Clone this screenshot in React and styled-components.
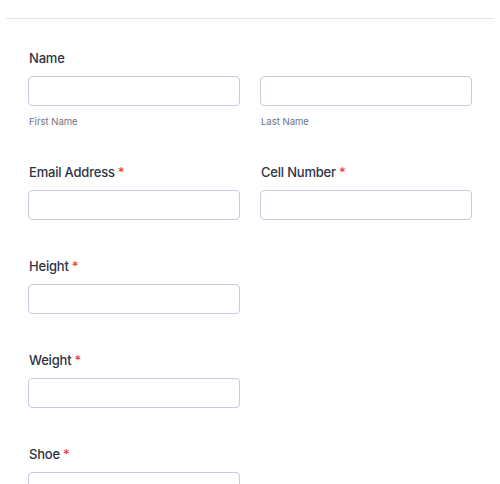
import React from 'react';
import styled, { createGlobalStyle } from 'styled-components';

const GlobalStyle = createGlobalStyle`
    body {
        margin: 0;
        background: #ffffff;
        font-family: Inter, "Noto Sans", sans-serif;
    }
`

const Page = styled.div`
    width: 500px;
    height: 484px;
    overflow: hidden;
    padding-top: 18px;
    box-sizing: border-box;
`

const Divider = styled.div`
    height: 1px;
    margin: 0 6px;
    background: #e3e5ee;
`

const Form = styled.div`
    padding: 29px 28px 0 28px;
    display: flex;
    flex-direction: column;
    gap: 36px;
`

const Row = styled.div`
    display: grid;
    grid-template-columns: ${props => props.$cols === 2 ? '212px 212px' : '212px'};
    column-gap: 20px;
`

const Field = styled.div`
    display: flex;
    flex-direction: column;
`

const Label = styled.label`
    font-size: 13px;
    font-weight: 500;
    letter-spacing: -0.2px;
    line-height: 20px;
    color: #2c3345;
    padding-left: 1px;
    margin-bottom: 8px;
`

const Star = styled.span`
    color: #f23a3c;
    margin-left: 3px;
`

const Input = styled.div`
    height: 30px;
    box-sizing: border-box;
    border: 1px solid #c7cbdd;
    border-radius: 4px;
    background: #ffffff;
`

const SubLabel = styled.span`
    font-size: 9.5px;
    line-height: 12px;
    color: #6c7286;
    margin-top: 10px;
    padding-left: 1px;
    margin-bottom: -2px;
`

const App = () => {
    return (
        <>
            <GlobalStyle />
            <Page>
                <Divider />
                <Form>
                    <Row $cols={2}>
                        <Label as="div" style={{ gridColumn: '1 / 3' }}>Name</Label>
                        <Field>
                            <Input />
                            <SubLabel>First Name</SubLabel>
                        </Field>
                        <Field>
                            <Input />
                            <SubLabel>Last Name</SubLabel>
                        </Field>
                    </Row>
                    <Row $cols={2}>
                        <Field>
                            <Label>Email Address<Star>*</Star></Label>
                            <Input />
                        </Field>
                        <Field>
                            <Label>Cell Number<Star>*</Star></Label>
                            <Input />
                        </Field>
                    </Row>
                    <Row>
                        <Field>
                            <Label>Height<Star>*</Star></Label>
                            <Input />
                        </Field>
                    </Row>
                    <Row>
                        <Field>
                            <Label>Weight<Star>*</Star></Label>
                            <Input />
                        </Field>
                    </Row>
                    <Row>
                        <Field>
                            <Label>Shoe<Star>*</Star></Label>
                            <Input />
                        </Field>
                    </Row>
                </Form>
            </Page>
        </>
    )
}

export default App;
